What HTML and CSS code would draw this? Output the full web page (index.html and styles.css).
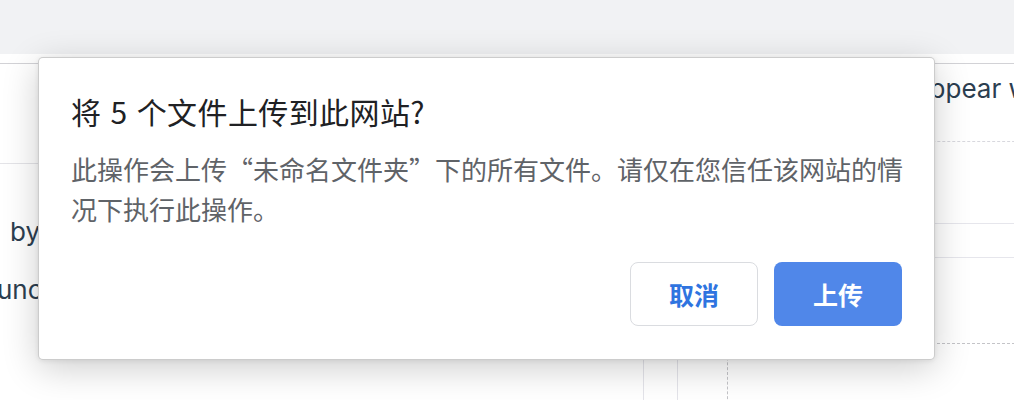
FILE: index.html
```html
<!DOCTYPE html>
<html lang="zh-CN">
<head>
<meta charset="utf-8">
<title>上传确认</title>
<link rel="stylesheet" href="styles.css">
</head>
<body>
<div class="topbar"></div>
<div class="main">
  <div class="col col-left">
    <div class="left-head"></div>
    <p class="bg-line line-a">by the author</p>
    <p class="bg-line line-b">unction call</p>
  </div>
  <div class="col col-mid"></div>
  <div class="col col-right">
    <div class="r-row r-text"><span class="r-label">appear with</span></div>
    <div class="r-row r-mid"></div>
    <div class="r-row r-thin"></div>
    <div class="drop"></div>
  </div>
</div>

<div class="dialog" role="dialog">
  <h1 class="dialog-title">将 5 个文件上传到此网站?</h1>
  <p class="dialog-body">此操作会上传“未命名文件夹”下的所有文件。请仅在您信任该网站的情况下执行此操作。</p>
  <div class="dialog-actions">
    <button class="btn btn-cancel">取消</button>
    <button class="btn btn-primary">上传</button>
  </div>
</div>
</body>
</html>
```

FILE: styles.css
```css
html, body {
  margin: 0;
  padding: 0;
  background: #ffffff;
  width: 1014px;
  height: 400px;
  overflow: hidden;
  font-family: "Noto Sans CJK SC", "Noto Sans", sans-serif;
}

.topbar {
  height: 54px;
  background: #f1f2f4;
}

.main {
  margin-top: 9px;
  border-top: 1px solid #d2d2d6;
  display: flex;
  height: 340px;
}

.col {
  box-sizing: border-box;
}

.col-left {
  width: 644px;
  border-right: 1px solid #e4e4ea;
  flex: none;
}

.left-head {
  height: 99px;
  border-bottom: 1px solid #e4e4e8;
}

.bg-line {
  margin: 0;
  font-family: "Inter", "Noto Sans", sans-serif;
  font-size: 26px;
  line-height: 40px;
  color: #2c3e50;
  white-space: nowrap;
}

.line-a {
  margin-top: 48px;
  padding-left: 10px;
}

.line-b {
  margin-top: 18px;
  text-indent: -3px;
}

.col-mid {
  width: 34px;
  border-right: 1px solid #e4e4ea;
  flex: none;
}

.col-right {
  flex: 1;
  display: flex;
  flex-direction: column;
}

.r-row {
  box-sizing: border-box;
}

.r-text {
  height: 78px;
  padding-top: 5px;
  border-bottom: 1px dashed #d8d8de;
}

.r-label {
  display: block;
  padding-left: 237px;
  font-family: "Inter", "Noto Sans", sans-serif;
  font-size: 26px;
  line-height: 40px;
  color: #2c3e50;
  white-space: nowrap;
}

.r-mid {
  height: 82px;
  border-bottom: 1px solid #e6e6ec;
}

.r-thin {
  height: 34px;
  border-bottom: 1px solid #e6e6ec;
}

.drop {
  margin-top: 85px;
  margin-left: 49px;
  flex: 1;
  border-top: 1px dashed #c4c4c8;
  border-left: 1px dashed #c4c4c8;
}

.dialog {
  position: absolute;
  left: 38px;
  top: 57px;
  width: 897px;
  box-sizing: border-box;
  background: #ffffff;
  border: 1px solid rgba(0, 0, 0, 0.2);
  border-radius: 5px;
  padding: 34px 32px 33px 32px;
  box-shadow: 0 8px 36px rgba(0, 0, 0, 0.2), 0 1px 5px rgba(0, 0, 0, 0.08);
}

.dialog-title {
  margin: 0;
  font-family: "Noto Sans CJK SC", sans-serif;
  font-size: 30px;
  line-height: 39px;
  font-weight: 400;
  letter-spacing: 0.4px;
  word-spacing: 2px;
  color: #202124;
}

.dialog-body {
  margin: 18px -4px 0 0;
  font-size: 26px;
  line-height: 40px;
  color: #5f6368;
}

.dialog-actions {
  display: flex;
  justify-content: flex-end;
  gap: 16px;
  margin-top: 33px;
}

.btn {
  width: 128px;
  height: 64px;
  box-sizing: border-box;
  border-radius: 8px;
  font-family: "Noto Sans CJK SC", sans-serif;
  font-size: 25px;
  font-weight: 700;
  cursor: pointer;
  padding: 0;
}

.btn-cancel {
  background: #ffffff;
  border: 1.5px solid #dadce0;
  color: #2f74e0;
}

.btn-primary {
  background: #5087e9;
  border: none;
  color: #ffffff;
}
```
